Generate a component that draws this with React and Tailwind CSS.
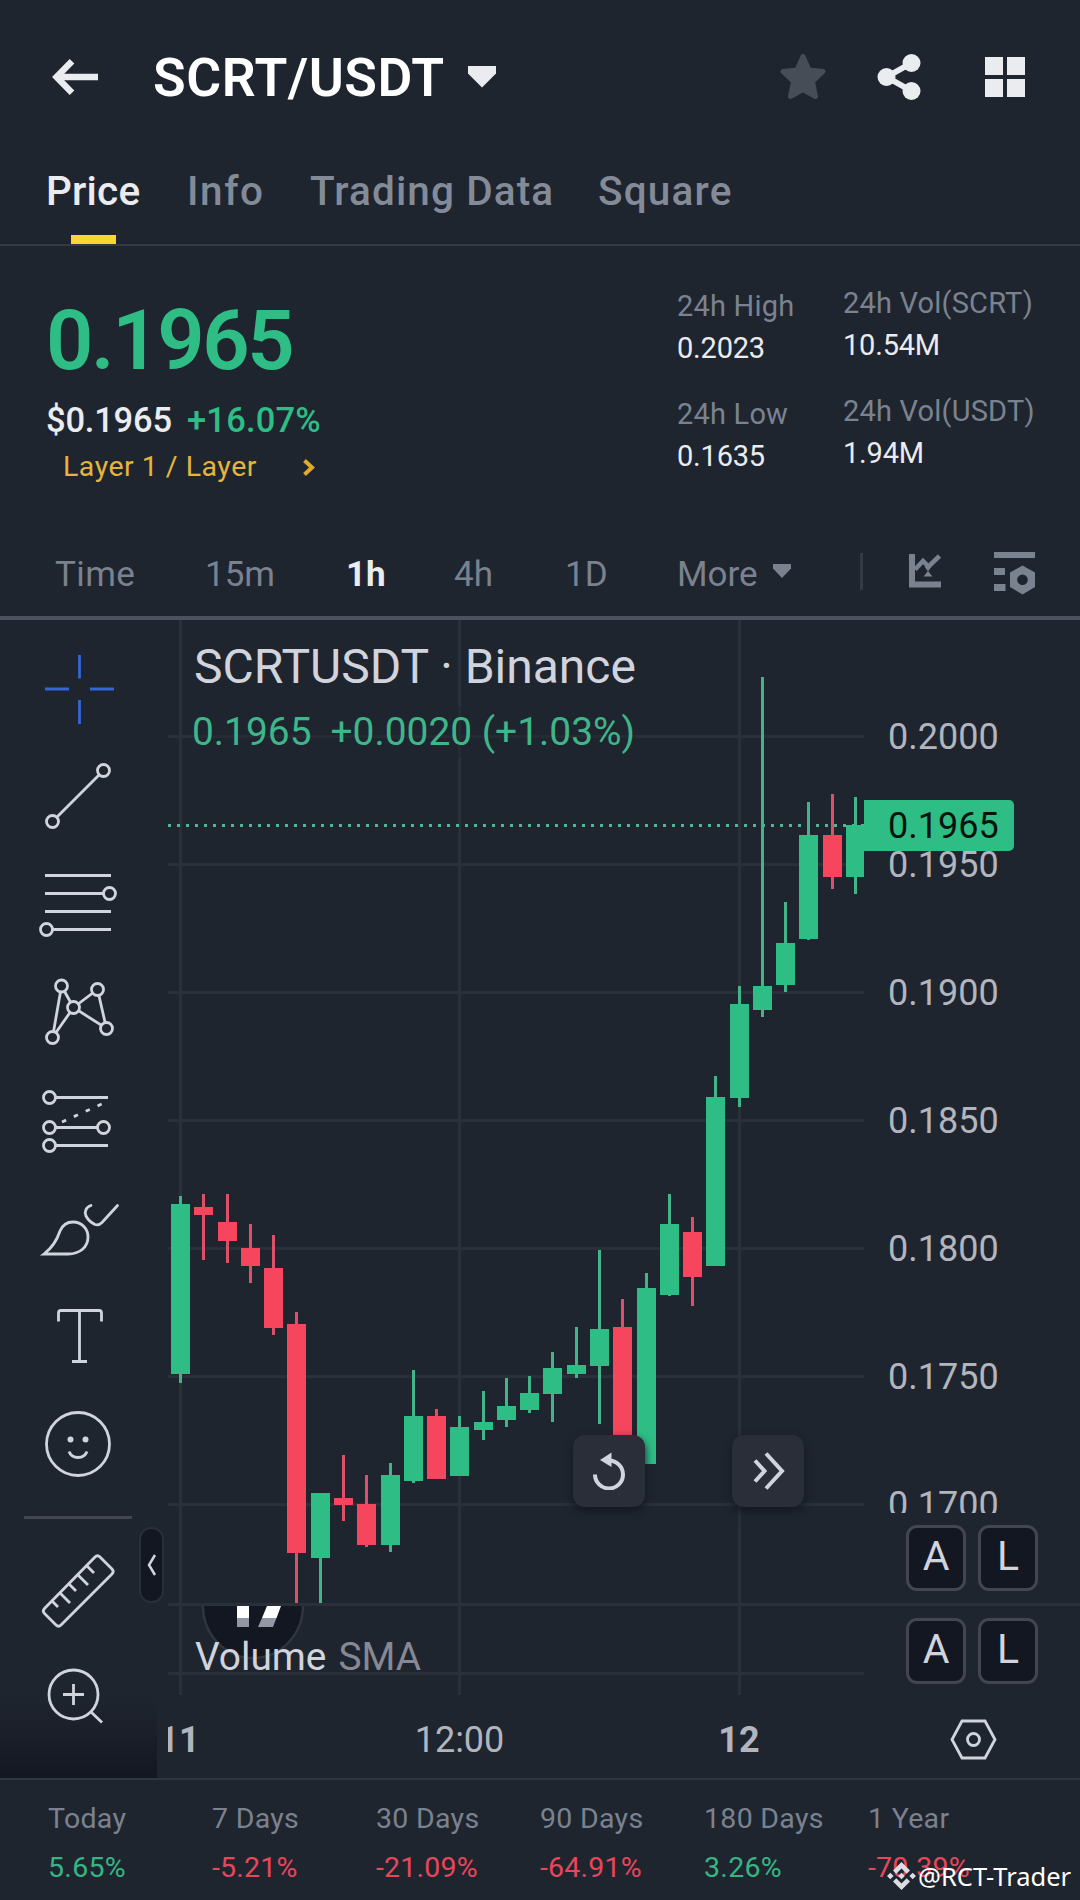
import React from 'react';

const UP = '#2ebd85';
const DOWN = '#f6465d';

const TABS = [
  { label: 'Price', className: 'w-[94px] tracking-[0.2px] text-[#eaecef]', active: true },
  { label: 'Info', className: 'w-[76px] tracking-[1.6px] text-[#848b98]' },
  { label: 'Trading Data', className: 'w-[241px] tracking-[1.1px] text-[#848b98]' },
  { label: 'Square', className: 'w-[134px] tracking-[1.2px] text-[#848b98]' },
];

const PERIODS = [
  { label: 'Today', value: '5.65%' },
  { label: '7 Days', value: '-5.21%' },
  { label: '30 Days', value: '-21.09%' },
  { label: '90 Days', value: '-64.91%' },
  { label: '180 Days', value: '3.26%' },
  { label: '1 Year', value: '-70.39%' },
];

const PRICE_TICKS = ['0.2000', '0.1950', '0.1900', '0.1850', '0.1800', '0.1750', '0.1700'];

// [x, high, body top, body bottom, low, up]
const CANDLES = [
  [180.5, 1196, 1204, 1374, 1383, 1],
  [203.5, 1194, 1207, 1215, 1260, 0],
  [227.5, 1194, 1222, 1241, 1263, 0],
  [250.5, 1224, 1248, 1266, 1283, 0],
  [273.5, 1235, 1268, 1328, 1335, 0],
  [296.5, 1312, 1324, 1553, 1603, 0],
  [320.5, 1493, 1493, 1558, 1603, 1],
  [343.5, 1455, 1498, 1505, 1521, 0],
  [366.5, 1475, 1504, 1545, 1547, 0],
  [390.5, 1463, 1475, 1545, 1552, 1],
  [413.5, 1370, 1416, 1481, 1483, 1],
  [436.5, 1409, 1416, 1479, 1479, 0],
  [459.5, 1416, 1427, 1476, 1476, 1],
  [483.5, 1391, 1422, 1430, 1440, 1],
  [506.5, 1378, 1406, 1420, 1427, 1],
  [529.5, 1376, 1393, 1410, 1413, 1],
  [552.5, 1352, 1368, 1394, 1422, 1],
  [576.5, 1327, 1365, 1374, 1378, 1],
  [599.5, 1250, 1329, 1366, 1424, 1],
  [622.5, 1299, 1327, 1445, 1445, 0],
  [646.5, 1273, 1288, 1464, 1464, 1],
  [669.5, 1194, 1224, 1295, 1296, 1],
  [692.5, 1217, 1232, 1277, 1306, 0],
  [715.5, 1076, 1097, 1266, 1266, 1],
  [739.5, 986, 1004, 1098, 1107, 1],
  [762.5, 677, 986, 1010, 1017, 1],
  [785.5, 902, 943, 985, 992, 1],
  [808.5, 802, 835, 939, 940, 1],
  [832.5, 794, 835, 877, 889, 0],
  [855.5, 797, 825, 877, 894, 1],
];

const Header = () => (
  <header className="flex h-[154px] items-center pl-[52px] pr-[55px]">
    <svg width="46" height="36" viewBox="0 0 46 36" fill="none" stroke="#eaecef" strokeWidth="6.5">
      <path d="M46 18H5" />
      <path d="M20 2.3L4.6 18L20 33.7" />
    </svg>
    <h1 className="ml-[55px] mt-[2px] w-[293px] whitespace-nowrap text-[53.5px] font-semibold leading-none tracking-[0.5px] text-white">
      SCRT/USDT
    </h1>
    <svg className="ml-[22px]" width="28" height="22" viewBox="0 0 28 22" fill="#eaecef">
      <path d="M0 0H28V7.5L14 21.5L0 7.5Z" />
    </svg>
    <div className="ml-auto flex items-center">
      <svg width="46" height="48" viewBox="0 0 46 48" fill="#474d57" stroke="#474d57" strokeWidth="5" strokeLinejoin="round">
        <path d="M23 3.5L29 17L43 18.5L32.5 28.5L35.500 43.500L23 36.5L10.500 43.500L13.5 28.5L3 18.5L17 17Z" />
      </svg>
      <svg className="ml-[51px]" width="44" height="48" viewBox="0 0 44 48" fill="#eaecef" stroke="#eaecef">
        <path d="M9.500 24L34.500 10M9.500 24L34.500 38" strokeWidth="6" />
        <circle cx="9.500" cy="24" r="9" stroke="none" />
        <circle cx="34.500" cy="10" r="9" stroke="none" />
        <circle cx="34.500" cy="38" r="9" stroke="none" />
      </svg>
      <div className="ml-[64px] grid grid-cols-2 gap-[4px]">
        <span className="h-[18px] w-[18px] bg-[#eaecef]" />
        <span className="h-[18px] w-[18px] bg-[#eaecef]" />
        <span className="h-[18px] w-[18px] bg-[#eaecef]" />
        <span className="h-[18px] w-[18px] bg-[#eaecef]" />
      </div>
    </div>
  </header>
);

const Tabs = () => (
  <nav className="flex h-[92px] gap-[47px] border-b-2 border-[#343a45] pl-[46px] pt-[2px]">
    {TABS.map((tab) => (
      <div key={tab.label} className={`flex flex-col ${tab.className}`}>
        <span className="whitespace-nowrap text-[40.5px] font-medium leading-[70px]">{tab.label}</span>
        {tab.active && <span className="ml-[25px] mt-[9px] h-[9px] w-[45px] shrink-0 bg-[#fcd535]" />}
      </div>
    ))}
  </nav>
);

const Stat = ({ label, value }) => (
  <div className="whitespace-nowrap text-[29px] leading-[42px]">
    <div className="tracking-[0.2px] text-[#7b828f]">{label}</div>
    <div className="tracking-[-0.2px] text-[#eaecef]">{value}</div>
  </div>
);

const Summary = () => (
  <section className="flex h-[287px]">
    <div className="w-[630px] pl-[46px] pt-[49px]">
      <div className="text-[83px] font-semibold leading-[92px] tracking-[-2.4px] text-[#2ebd85]">0.1965</div>
      <div className="mt-[9px] flex text-[34.5px] font-medium leading-[48px]">
        <span className="w-[141px] tracking-[-0.2px] text-[#eaecef]">$0.1965</span>
        <span className="tracking-[0.2px] text-[#2ebd85]">+16.07%</span>
      </div>
      <div className="mt-[3px] flex items-center pl-[17px] text-[28.5px] leading-[40px] text-[#e5b53c]">
        <span className="w-[240px] tracking-[0.5px]">Layer 1 / Layer</span>
        <svg width="12" height="17" viewBox="0 0 12 17" fill="none" stroke="#e0ab2b" strokeWidth="4">
          <path d="M1.500 1.500L9 8.500L1.500 15.500" />
        </svg>
      </div>
    </div>
    <div className="flex w-[166px] flex-col gap-[24px] pl-[47px] pt-[39px]">
      <Stat label="24h High" value="0.2023" />
      <Stat label="24h Low" value="0.1635" />
    </div>
    <div className="flex flex-col gap-[24px] pl-[47px] pt-[36px]">
      <Stat label="24h Vol(SCRT)" value="10.54M" />
      <Stat label="24h Vol(USDT)" value="1.94M" />
    </div>
  </section>
);

const Intervals = () => (
  <section className="flex h-[87px] items-center border-b-4 border-[#4d535e] pl-[55px] pt-[2px] text-[35px] text-[#7b828f]">
    <span className="w-[150px] tracking-[0.4px]">Time</span>
    <span className="w-[141px]">15m</span>
    <span className="w-[108px] font-bold text-[#eaecef]">1h</span>
    <span className="w-[111px]">4h</span>
    <span className="w-[112px]">1D</span>
    <span className="w-[96px]">More</span>
    <svg className="-mt-[9px]" width="18" height="14" viewBox="0 0 18 14" fill="#7b828f">
      <path d="M0 0H18V4.500L9 14L0 4.500Z" />
    </svg>
    <span className="-mt-[9px] ml-[69px] h-[37px] w-[3px] bg-[#343a45]" />
    <svg className="-mt-[9px] ml-[46px]" width="33" height="34" viewBox="0 0 33 34" fill="none" stroke="#7b828f">
      <path d="M3 0V30.500H32" strokeWidth="6" />
      <path d="M6 15.500L14 7L19.500 12.500L30.500 2" strokeWidth="4.500" />
      <path d="M14.500 22.500L19 17L23.500 22.500ZM15.500 12.500H22.500L19 17.500Z" fill="#7b828f" stroke="none" />
    </svg>
    <svg className="-mt-[6px] ml-[52px]" width="42" height="44" viewBox="0 0 42 44" fill="#7b828f">
      <path d="M0 1H41V7H0ZM0 17H11V24H0ZM0 33H11.500V40H0Z" />
      <path fillRule="evenodd" d="M28.500 14.500L41 21.500V36L28.500 43.500L16 36V21.500ZM28.500 23.500A5.300 5.300 0 1 0 28.500 34.100A5.300 5.300 0 1 0 28.500 23.500Z" />
    </svg>
  </section>
);

const Node = ({ x, y }) => <circle cx={x} cy={y} r="6" fill="#1f252f" />;

const Tool = ({ children, color = '#d1d4dc' }) => (
  <svg className="shrink-0" width="157" height="108" viewBox="0 0 157 108" fill="none" stroke={color} strokeWidth="2.800">
    {children}
  </svg>
);

const Toolbar = () => (
  <aside className="flex w-[157px] shrink-0 flex-col bg-[linear-gradient(to_top,#131722,transparent_80px)] pt-[15px]">
    <Tool color="#3565d8">
      <path d="M79.500 20V43.500M79.500 65V89M45 54H69M90 54H114" />
    </Tool>
    <Tool>
      <path d="M52.500 78.500L103.500 27.500" />
      <Node x={52.5} y={78.5} />
      <Node x={103.5} y={27.5} />
    </Tool>
    <Tool>
      <path d="M45 24.500H111M45 42.500H109M45 60.500H111M46 78.500H111" />
      <Node x={109.5} y={42.5} />
      <Node x={46.5} y={78.5} />
    </Tool>
    <Tool>
      <path d="M61.500 27L52.500 78.500L73.500 48.500ZM73.500 48.500L97.500 30.500L106.500 69.500Z" />
      <Node x={61.5} y={27} />
      <Node x={97.5} y={30.5} />
      <Node x={73.5} y={48.5} />
      <Node x={106.5} y={69.5} />
      <Node x={52.5} y={78.5} />
    </Tool>
    <Tool>
      <path d="M50 30.500H108M50 60.500H103M50 78.500H108" />
      <path d="M62 55L104 36" strokeDasharray="4.500 8.500" />
      <Node x={49.5} y={30.5} />
      <Node x={49.5} y={60.5} />
      <Node x={103.5} y={60.5} />
      <Node x={49.5} y={78.5} />
    </Tool>
    <Tool>
      <path d="M44 79C52 73 57 65 60 56C63 49 68 47 73 47C82 47 88 54 88 62C88 72 80 79 68 79Z" />
      <path d="M91 30.500C86 32 84 37 86 41C88 45 92 48 95 49.500C98 50.500 100 49.500 102 47.500L117.500 30.500" strokeLinecap="round" />
    </Tool>
    <Tool>
      <path d="M58.500 38.500V30Q58.500 27.500 61 27.500H99Q101.500 27.500 101.500 30V38.500M79.500 27.500V78.500M72 78.500H87" />
    </Tool>
    <Tool>
      <circle cx="78" cy="53" r="31.500" />
      <circle cx="70.500" cy="48.500" r="3" fill="#d1d4dc" stroke="none" />
      <circle cx="85.500" cy="48.500" r="3" fill="#d1d4dc" stroke="none" />
      <path d="M69 60.500C72 68.500 84 68.500 87 60.500" />
    </Tool>
    <div className="ml-[24px] mt-[17px] mb-[18px] h-[3px] w-[108px] shrink-0 bg-[#434651]" />
    <Tool>
      <path d="M95 20Q97.500 17.500 100 20L112 32Q114.500 34.500 112 37L61 88Q58.500 90.500 56 88L44.500 76.500Q42 74 44.500 71.500Z" />
      <path d="M52 64L58 70M60 56L70 66M69 47L76 54M78 38L88 48M87 29L94 36" />
    </Tool>
    <Tool>
      <circle cx="73.500" cy="49.500" r="24.500" />
      <path d="M73.500 39V60M63 49.500H84M90.500 66.500L102 77.500" />
    </Tool>
  </aside>
);

const Plot = () => (
  <svg className="block" width="696" height="1158" viewBox="168 620 696 1158">
    <g fill="#293039">
      {[736, 864, 992, 1120, 1248, 1376, 1504, 1604, 1673].map((y) => (
        <rect key={y} x="168" y={y - 1} width="696" height="3" />
      ))}
      {[180, 459, 739].map((x) => (
        <rect key={x} x={x - 1} y="620" width="3" height="1075" />
      ))}
    </g>
    <line x1="168" x2="864" y1="825.500" y2="825.500" stroke="#4fb892" strokeWidth="3" strokeDasharray="3 6" />
    {CANDLES.map(([x, high, top, bottom, low, up]) => (
      <g key={x}>
        <rect x={x - 1.5} y={high} width="3" height={low - high} fill={up ? '#43b388' : '#dc5167'} />
        <rect x={x - 9.5} y={top} width="19" height={bottom - top} fill={up ? UP : DOWN} />
      </g>
    ))}
    {/* provider badge, cut off by the pane border */}
    <path d="M202 1606H304C304 1634 282 1659 253 1659S202 1634 202 1606Z" fill="#131722" />
    <path d="M203 1606C203 1634 225 1658 253 1658S303 1634 303 1606" fill="none" stroke="#2f3541" strokeWidth="2.500" />
    <path d="M237 1606H249V1618H237ZM267 1606H281L276.500 1618H262Z" fill="#fff" />
    <path d="M237 1618H249V1627H237ZM262 1618H276.500L273 1627H258Z" fill="#9297a3" />
    <g fill="#b2b5be" fontFamily="Roboto, sans-serif" fontSize="36" textAnchor="middle">
      <text x="179" y="1752" fontWeight="700">11</text>
      <text x="459.500" y="1752">12:00</text>
      <text x="739" y="1752" fontWeight="700">12</text>
    </g>
  </svg>
);

const ScaleButtons = () => (
  <div className="flex gap-[12px] pl-[42px]">
    {['A', 'L'].map((letter) => (
      <button
        key={letter}
        className="flex h-[66px] w-[60px] items-center justify-center rounded-[11px] border-[3px] border-[#434651] bg-[#131722] pb-[3px] text-[41px] leading-none text-[#d1d4dc]"
      >
        {letter}
      </button>
    ))}
  </div>
);

const PriceAxis = () => (
  <div className="relative flex w-[216px] flex-col">
    <div className="h-[893px] shrink-0 overflow-hidden pt-[53px] pl-[24px] text-[36px] text-[#b2b5be]">
      {PRICE_TICKS.map((tick) => (
        <div key={tick} className="h-[128px] leading-[128px]">
          {tick}
        </div>
      ))}
    </div>
    <div className="h-[90px] shrink-0 pt-[12px]">
      <ScaleButtons />
    </div>
    <div className="h-[3px] shrink-0 bg-[#293039]" />
    <div className="pt-[12px]">
      <ScaleButtons />
    </div>
    <svg className="ml-[86px] mt-[35px]" width="47" height="41" viewBox="0 0 47 41" fill="none" stroke="#d1d4dc" strokeWidth="2.800">
      <path d="M12 2H35L45 20.500L35 39H12L2 20.500Z" />
      <circle cx="23.500" cy="20.500" r="6" />
    </svg>
    {/* last traded price */}
    <div className="absolute left-0 top-[180px] h-[51px] w-[150px] rounded-r-[5px] bg-[#2ebd85] pl-[24px] text-[36px] leading-[53px] text-[#07130e]">
      0.1965
    </div>
  </div>
);

const Chart = () => (
  <section className="relative flex h-[1158px]">
    <Toolbar />
    <div className="ml-[11px] w-[696px] shrink-0">
      <Plot />
    </div>
    <PriceAxis />

    <div className="absolute left-[192px] top-[20px] whitespace-nowrap">
      <div className="pl-[2px] text-[48px] leading-[54px] text-[#d1d4dc]">SCRTUSDT · Binance</div>
      <div className="mt-[12px] flex gap-[19px] bg-[#1f252f]/50 text-[38.900px] leading-[52px] text-[#3fb68a]">
        <span>0.1965</span>
        <span>+0.0020 (+1.03%)</span>
      </div>
    </div>
    <div className="absolute left-[195px] top-[1011px] flex gap-[12px] whitespace-nowrap text-[38.800px] leading-[52px]">
      <span className="text-[#d1d4dc]">Volume</span>
      <span className="text-[#868993]">SMA</span>
    </div>
    <div className="absolute left-[139px] top-[907px] flex h-[76px] w-[25px] items-center justify-center rounded-[12px] border-2 border-[#2a2e39] bg-[#131722]">
      <svg width="11" height="22" viewBox="0 0 11 22" fill="none" stroke="#d1d4dc" strokeWidth="2.500">
        <path d="M9 1L3 11L9 21" />
      </svg>
    </div>
    <button className="absolute left-[573px] top-[815px] flex h-[72px] w-[72px] items-center justify-center rounded-[12px] bg-[#2a2e39] shadow-[0_4px_9px_#131722]">
      <svg width="34" height="38" viewBox="0 0 34 38" fill="none" stroke="#d1d4dc" strokeWidth="4">
        <path d="M3 22.500A14 14 0 1 0 17 8.500" />
        <path d="M8 8L19.500 0.500V15Z" fill="#d1d4dc" stroke="none" />
      </svg>
    </button>
    <button className="absolute left-[732px] top-[815px] flex h-[72px] w-[72px] items-center justify-center rounded-[12px] bg-[#2a2e39] shadow-[0_4px_9px_#131722]">
      <svg width="34" height="40" viewBox="0 0 34 40" fill="none" stroke="#d1d4dc" strokeWidth="4">
        <path d="M4 9.500L13.500 20L4 30.500M15 2.500L31 20L15 37.500" />
      </svg>
    </button>
  </section>
);

const Performance = () => (
  <footer className="relative flex h-[122px] border-t-2 border-[#303640] pl-[48px] pt-[14px]">
    {PERIODS.map(({ label, value }) => (
      <div key={label} className="w-[164px] shrink-0 whitespace-nowrap text-[28.500px] leading-[49px]">
        <div className="tracking-[0.3px] text-[#7b828f]">{label}</div>
        <div className={value.startsWith('-') ? 'tracking-[0.2px] text-[#e8465b]' : 'tracking-[0.3px] text-[#36b584]'}>{value}</div>
      </div>
    ))}
    <div className="absolute left-[887px] top-[78px] flex items-center gap-[2px] whitespace-nowrap font-['Noto_Sans',sans-serif] text-[25.500px] leading-[36px] text-white">
      <svg width="29" height="30" viewBox="0 0 29 30" fill="#dcdde0">
        <path d="M14.500 1L23 9.500L19.700 12.800L14.500 7.600L9.300 12.800L6 9.500ZM14.500 29L6 20.500L9.300 17.200L14.500 22.400L19.700 17.200L23 20.500ZM14.500 11.700L17.800 15L14.500 18.300L11.200 15ZM3.300 11.700L6.600 15L3.300 18.300L0 15ZM25.700 11.700L29 15L25.700 18.300L22.400 15Z" />
      </svg>
      <span>@RCT-Trader</span>
    </div>
  </footer>
);

const App = () => (
  <div className="h-[1900px] w-[1080px] overflow-hidden bg-[#1f252f] font-[Roboto,sans-serif]">
    <Header />
    <Tabs />
    <Summary />
    <Intervals />
    <Chart />
    <Performance />
  </div>
);

export default App;
